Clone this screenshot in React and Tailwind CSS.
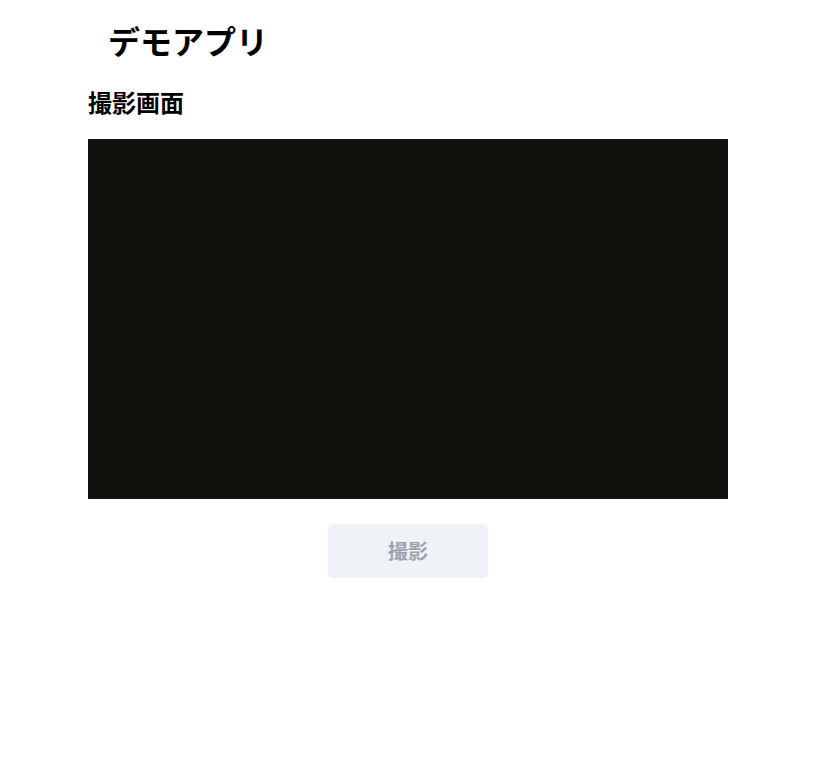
export default function App() {
  return (
    <div className="min-h-screen bg-white px-[88px] text-black" style={{ fontFamily: '"Noto Sans CJK JP", "Noto Sans", sans-serif' }}>
      <h1 className="pl-[20px] pt-[18px] text-[32px] font-bold leading-[44px]">デモアプリ</h1>
      <h2 className="mt-[24px] text-[24px] font-bold leading-[32px]">撮影画面</h2>
      <div className="mt-[21px] h-[360px] w-[640px] bg-[#11110e]" />
      <div className="flex w-[640px] justify-center pt-[25px]">
        <button
          disabled
          className="h-[54px] w-[160px] rounded-md bg-[#eff2f7] text-[20px] font-bold text-[#9ca3af]"
        >
          撮影
        </button>
      </div>
    </div>
  )
}
